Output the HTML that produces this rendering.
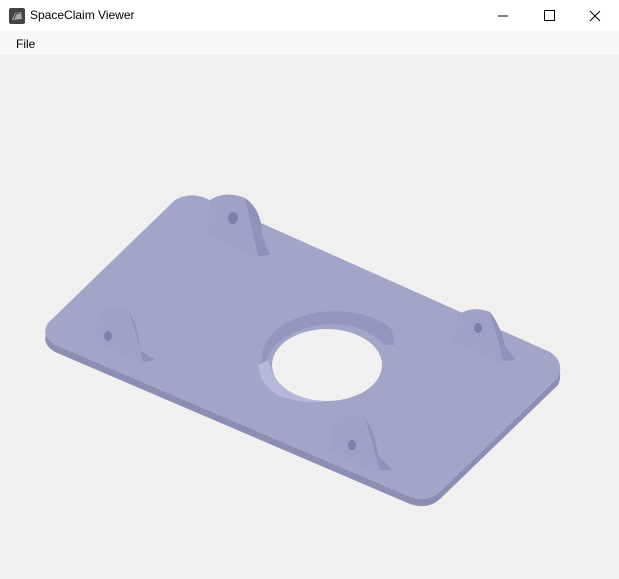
<!DOCTYPE html>
<html><head><style>
body{margin:0;width:619px;height:579px;background:#f0f0f0;font-family:"Liberation Sans",sans-serif;overflow:hidden;position:relative}
.tb{position:absolute;left:0;top:0;width:619px;height:31px;background:#fff}
.tb span{position:absolute;left:30px;top:8px;font-size:12px;color:#000}
.mb{position:absolute;left:0;top:31px;width:619px;height:24px;background:#f7f7f7}
.mb span{position:absolute;left:16px;top:6px;font-size:12px}
</style></head><body>
<div class="tb">
<svg style="position:absolute;left:9px;top:8px" width="16" height="16"><rect x="0" y="0" width="16" height="16" rx="2" fill="#444"/><path d="M3 12 L6 5 L12 4 L13 11 Z" fill="#aaa"/><path d="M5 11 L7 6 L11 5" stroke="#444" fill="none"/></svg>
<span>SpaceClaim Viewer</span>
<svg style="position:absolute;left:490px;top:9px" width="120" height="14"><line x1="8" y1="7" x2="18" y2="7" stroke="#000"/><rect x="54.5" y="1.5" width="10" height="10" fill="none" stroke="#000"/><path d="M100 2 L110 12 M110 2 L100 12" stroke="#000"/></svg>
</div>
<div class="mb"><span>File</span></div>
<svg style="position:absolute;left:0;top:0" width="619" height="579">
<path d="M175 200 Q190 192 205 198 L550 352 Q565 362 558 378 L440 492 Q428 503 410 497 L55 345 Q40 336 48 323 Z" transform="translate(0,7)" fill="#8c8eb4"/>
<path d="M175 200 Q190 192 205 198 L550 352 Q565 362 558 378 L440 492 Q428 503 410 497 L55 345 Q40 336 48 323 Z" fill="#a3a5c8"/>
<path d="M262 372 Q255 325 318 312 Q370 308 392 330 L395 345 L385 345 Q360 320 320 325 Q268 335 265 368 Z" fill="#9496bd"/>
<path d="M258 365 Q262 405 325 402 L328 392 Q275 395 268 360 Z" fill="#b6b8d8"/>
<ellipse cx="327" cy="365" rx="55" ry="36" fill="#f0f0f0"/>
<g fill="#9fa1c6">
<path d="M208 230 L210 200 Q225 190 245 198 Q262 210 262 235 L270 255 L255 258 L200 232 Z"/>
<path d="M96 330 L100 310 Q115 302 128 310 Q138 325 140 350 L155 360 L140 364 L95 340 Z"/>
<path d="M455 335 L458 315 Q472 305 490 312 Q500 325 505 345 L515 360 L500 362 L450 340 Z"/>
<path d="M332 445 L335 420 Q348 410 365 418 Q375 432 378 455 L392 470 L375 472 L330 450 Z"/>
</g>
<g fill="#8688b0" opacity="0.6">
<path d="M245 198 Q262 210 262 235 L270 255 L258 256 Q252 230 245 198Z"/>
<path d="M128 310 Q138 325 140 350 L155 360 L143 362 Q136 330 128 310Z"/>
<path d="M490 312 Q500 325 505 345 L515 360 L503 361 Q497 335 490 312Z"/>
<path d="M365 418 Q375 432 378 455 L392 470 L380 471 Q372 440 365 418Z"/>
</g>
<g fill="#7e80a8"><ellipse cx="233" cy="218" rx="5" ry="6"/><ellipse cx="108" cy="336" rx="4" ry="5"/><ellipse cx="478" cy="328" rx="4" ry="5"/><ellipse cx="352" cy="445" rx="4" ry="5"/></g>
</svg>
</body></html>
